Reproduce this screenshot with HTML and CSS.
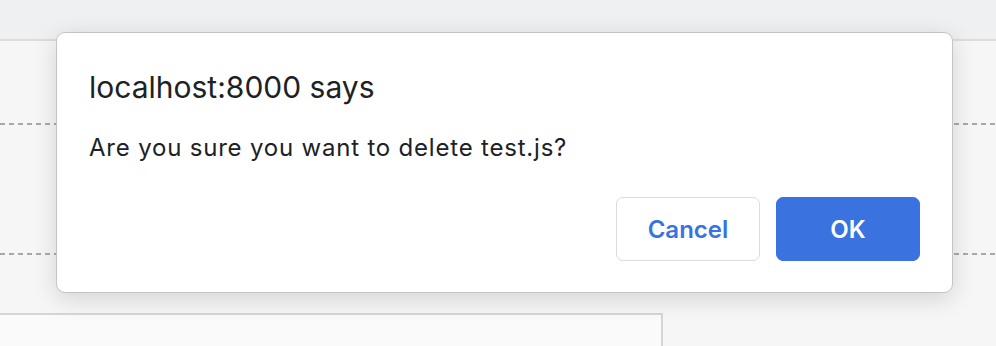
FILE: index.html
```html
<!DOCTYPE html>
<html>
<head>
<meta charset="utf-8">
<link rel="stylesheet" href="styles.css">
</head>
<body>
<div class="page">
  <div class="topbar"></div>
  <div class="panel">
    <div class="gap1"></div>
    <div class="dash"></div>
    <div class="gap2"></div>
    <div class="dash"></div>
    <div class="gap3"></div>
    <div class="bottom">
      <div class="box"></div>
    </div>
  </div>
</div>
<div class="dialog">
  <div class="title">localhost:8000 says</div>
  <div class="message">Are you sure you want to delete test.js?</div>
  <div class="actions">
    <button class="btn cancel">Cancel</button>
    <button class="btn ok">OK</button>
  </div>
</div>
</body>
</html>
```
FILE: styles.css
```css
html, body {
  margin: 0;
  padding: 0;
}
body {
  width: 996px;
  height: 346px;
  overflow: hidden;
  background: #f3f3f3;
  font-family: Inter, "Liberation Sans", sans-serif;
}
.page {
  display: flex;
  flex-direction: column;
  height: 346px;
}
.topbar {
  height: 39px;
  background: #eff0f2;
  flex: none;
}
.panel {
  flex: 1;
  border-top: 2px solid #dcdcdc;
  background: #f6f6f6;
  display: flex;
  flex-direction: column;
}
.gap1 { height: 82px; flex: none; }
.gap2 { height: 128px; flex: none; }
.gap3 { height: 58px; flex: none; }
.dash {
  height: 2px;
  flex: none;
  background: repeating-linear-gradient(to right, #a9a9a9 0 5px, transparent 5px 9px);
}
.bottom {
  flex: 1;
  display: flex;
}
.box {
  width: 661px;
  border-top: 2px solid #d6d6d6;
  border-right: 2px solid #d6d6d6;
  background: #fafafa;
}
.dialog {
  position: absolute;
  left: 56px;
  top: 32px;
  width: 831px;
  height: 228px;
  background: #fff;
  border: 1px solid #c4c4c4;
  border-radius: 9px;
  box-shadow: 0 6px 24px rgba(0,0,0,0.14);
  padding: 0 32px 31px 32px;
  display: flex;
  flex-direction: column;
  color: #202124;
}
.title {
  font-size: 30px;
  line-height: 36px;
  margin-top: 36px;
}
.message {
  font-size: 24px;
  line-height: 30px;
  margin-top: 28px;
  letter-spacing: 0.8px;
}
.actions {
  display: flex;
  justify-content: flex-end;
  gap: 16px;
  margin-top: auto;
}
.btn {
  width: 144px;
  height: 64px;
  border-radius: 7px;
  font-family: inherit;
  font-size: 24px;
  font-weight: 600;
  cursor: pointer;
}
.cancel {
  background: #fff;
  border: 1px solid #dadce0;
  color: #3874e0;
}
.ok {
  background: #3a73df;
  border: 1px solid #3a73df;
  color: #fff;
}
```
